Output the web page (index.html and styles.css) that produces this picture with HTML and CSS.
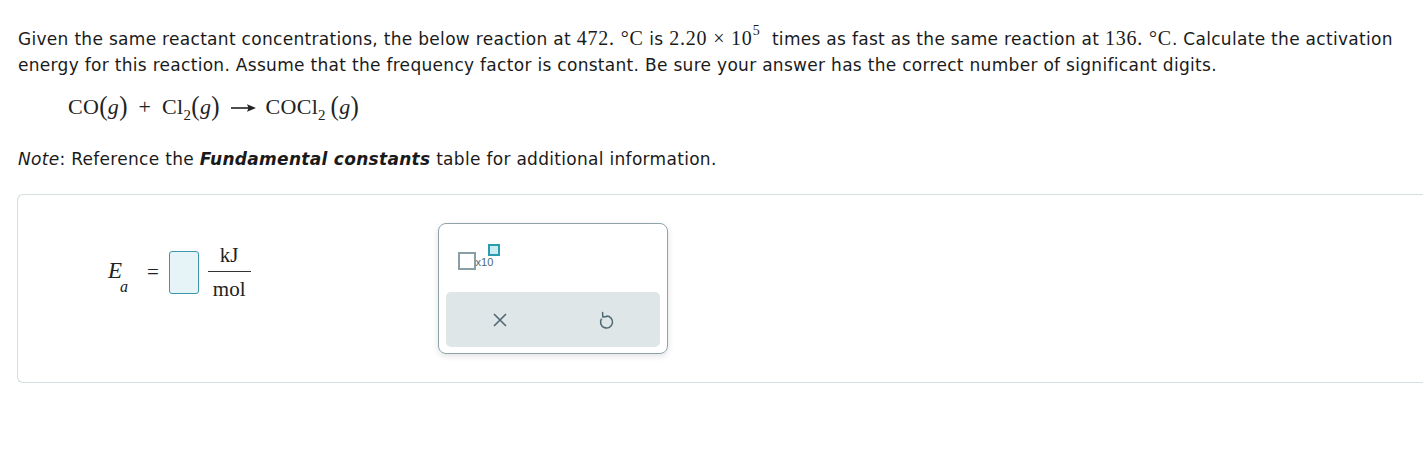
FILE: index.html
```html
<!DOCTYPE html>
<html>
<head>
<meta charset="utf-8">
<link rel="stylesheet" href="styles.css">
</head>
<body>
<div class="page">
  <p class="question">Given the same reactant concentrations, the below reaction at <span class="m">472.&nbsp;°C</span> is <span class="m">2.20 × 10<sup>5</sup></span>&nbsp; times as fast as the same reaction at <span class="m">136.&nbsp;°C</span>. Calculate the activation energy for this reaction. Assume that the frequency factor is constant. Be sure your answer has the correct number of significant digits.</p>
  <div class="reaction">CO<span class="p">(</span><i>g</i><span class="p">)</span> <span class="op">+</span> Cl<sub>2</sub><span class="p">(</span><i>g</i><span class="p">)</span> <svg class="arrow" width="25" height="10" viewBox="0 0 25 10"><path d="M0 5 H18" stroke="#222" stroke-width="1.6"/><path d="M25 5 L16 1.2 L17.5 5 L16 8.8 Z" fill="#222"/></svg> COCl<sub>2</sub>&thinsp;<span class="p">(</span><i>g</i><span class="p">)</span></div>
  <p class="note"><i>Note</i>: Reference the <b><i>Fundamental constants</i></b> table for additional information.</p>
  <div class="answer">
    <div class="eq">
      <span class="ea"><i>E</i><sub><i>a</i></sub></span>
      <span class="equals">=</span>
      <span class="input"></span>
      <span class="frac"><span class="num">kJ</span><span class="den">mol</span></span>
    </div>
    <div class="pad">
      <div class="sci">
        <span class="sq"></span><span class="x10">x10</span><span class="sq2"></span>
      </div>
      <div class="actions">
        <svg class="icon" width="18" height="18" viewBox="0 0 18 18"><path d="M3 3 L15 15 M15 3 L3 15" stroke="#4e6872" stroke-width="1.6" fill="none"/></svg>
        <svg class="icon undo" width="18" height="20" viewBox="0 0 18 20"><path d="M8.5 6 A6 6 0 1 1 3.6 8.6" stroke="#4e6872" stroke-width="1.5" fill="none"/><path d="M4.6 2.6 L4.8 7 L9 6.4" stroke="#4e6872" stroke-width="1.5" fill="none" stroke-linejoin="round" stroke-linecap="round"/></svg>
      </div>
    </div>
  </div>
</div>
</body>
</html>
```
FILE: styles.css
```css
html, body { margin: 0; padding: 0; background: #fff; }
.page { padding: 0 0 0 18px; font-family: "DejaVu Sans", Verdana, sans-serif; font-size: 17px; letter-spacing: 0.3px; color: #1a1a1a; }
.question { margin: 0; padding-top: 25px; line-height: 26px; width: 1390px; }
.m { font-family: "Liberation Serif", "Times New Roman", serif; font-size: 20px; letter-spacing: 0.8px; }
.m sup { font-size: 14px; vertical-align: 10px; line-height: 0; }
.reaction { font-family: "Liberation Serif", "Times New Roman", serif; font-size: 22px; letter-spacing: 0.3px; padding-left: 50px; margin-top: 10px; height: 36px; line-height: 36px; color: #222; }
.reaction .p { font-size: 25px; display: inline-block; transform: scaleY(1.1); }
.reaction sub { font-size: 15px; vertical-align: -6px; line-height: 0; }
.reaction .op { margin: 0 5px; }
.reaction .arrow { margin: 0 4px 0 5px; vertical-align: 1px; }
.note { margin: 23px 0 0 0; line-height: 24px; }
.answer { margin-top: 23px; margin-left: -1px; height: 187px; border: 1px solid #d5dee1; border-right: none; border-radius: 6px 0 0 6px; display: flex; align-items: flex-start; letter-spacing: 0; }
.eq { display: flex; align-items: center; margin-left: 90px; margin-top: 48px; font-family: "Liberation Serif", "Times New Roman", serif; font-size: 21px; color: #222; }
.ea { position: relative; width: 30px; font-size: 23px; }
.ea sub { font-size: 16px; position: relative; top: 9px; left: -2px; }
.equals { margin: 0 10px 0 9px; }
.input { width: 30px; height: 43px; border: 1.5px solid #3a98ab; background: #e6f4f8; border-radius: 3px; box-sizing: border-box; }
.frac { display: flex; flex-direction: column; align-items: stretch; text-align: center; margin-left: 9px; }
.num { padding: 0 0 4px; border-bottom: 1.5px solid #333; line-height: 24px; }
.den { line-height: 26px; padding: 4px 5px 0; }
.pad { margin-left: 187px; margin-top: 28px; width: 230px; height: 131px; border: 1px solid #8fa2aa; border-radius: 8px; box-shadow: 0 2px 6px rgba(0,0,0,0.12); box-sizing: border-box; display: flex; flex-direction: column; }
.sci { position: relative; height: 68px; }
.sq { position: absolute; left: 19px; top: 28px; width: 14px; height: 14px; border: 2px solid #8a9ea6; }
.x10 { position: absolute; left: 37px; top: 32px; font-family: "Liberation Sans", Arial, sans-serif; font-size: 11px; color: #4e6872; }
.sq2 { position: absolute; left: 49px; top: 20px; width: 8px; height: 8px; border: 2px solid #2a9bb0; background: #c9ebf2; }
.actions { margin: 0 7px 0 7px; height: 55px; background: #dee6e8; border-radius: 5px; display: flex; align-items: center; padding-left: 45px; gap: 89px; }
```
